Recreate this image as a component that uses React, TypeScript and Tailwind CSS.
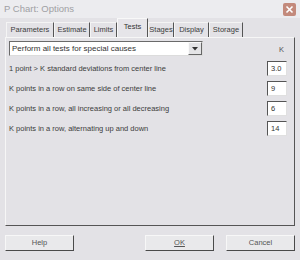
import React from "react";

const tabs = [
  { label: "Parameters", w: 48 },
  { label: "Estimate", w: 36 },
  { label: "Limits", w: 27 },
  { label: "Tests", w: 31, active: true },
  { label: "Stages", w: 26 },
  { label: "Display", w: 35 },
  { label: "Storage", w: 34 },
];

const rows = [
  { text: "1 point > K standard deviations from center line", value: "3.0" },
  { text: "K points in a row on same side of center line", value: "9" },
  { text: "K points in a row, all increasing or all decreasing", value: "6" },
  { text: "K points in a row, alternating up and down", value: "14" },
];

const Button = ({ label, w, underline }: { label: string; w: string; underline?: boolean }) => (
  <div
    className={`${w} h-[16px] flex items-center justify-center bg-[#e9e9eb] border border-t-[#f7f7f7] border-l-[#f7f7f7] border-r-[#4a4a4a] border-b-[#4a4a4a] text-[#555]`}
  >
    {underline ? <span className="underline">{label}</span> : label}
  </div>
);

export default function App() {
  return (
    <div
      className="w-[300px] h-[260px] bg-[#e3e2e6] text-[7.5px] text-[#3c3c3c] overflow-hidden"
      style={{ fontFamily: "'Liberation Sans', Arial, sans-serif" }}
    >
      {/* title bar */}
      <div className="h-[18px] bg-[#ececef] flex items-center justify-between pl-[4px] pr-[4px]">
        <span className="text-[9.5px] text-[#a0a0a4]">P Chart: Options</span>
        <div className="w-[13px] h-[13px] bg-[#c38a7c] rounded-[2px] flex items-center justify-center mt-[1px]">
          <svg width="9" height="9" viewBox="0 0 9 9">
            <path d="M1.5 1.5 L7.5 7.5 M7.5 1.5 L1.5 7.5" stroke="#fff" strokeWidth="1.6" />
          </svg>
        </div>
      </div>

      <div className="px-[5px]">
        {/* tabs */}
        <div className="flex items-end h-[19px] pl-[1px]">
          {tabs.map((t) =>
            t.active ? (
              <div
                key={t.label}
                className="h-[19px] flex items-center justify-center bg-[#e6e5e9] border-t border-l border-t-[#f8f8f8] border-l-[#f8f8f8] border-r border-r-[#555] text-[#333] pb-[3px]"
                style={{ width: t.w }}
              >
                {t.label}
              </div>
            ) : (
              <div
                key={t.label}
                className="h-[15px] flex items-center justify-center border-t border-l border-t-[#f4f4f4] border-l-[#f4f4f4] border-r border-r-[#555]"
                style={{ width: t.w }}
              >
                {t.label}
              </div>
            )
          )}
        </div>

        {/* panel */}
        <div className="h-[189px] border-l border-t border-l-[#f6f6f6] border-t-[#f6f6f6] border-r border-b border-r-[#555] border-b-[#555] pl-[3px] pr-[7px] pt-[3px]">
          <div className="flex items-start justify-between">
            <div className="w-[194px] h-[15px] bg-white border border-t-[#6a6a6a] border-l-[#6a6a6a] border-r-[#dcdcdc] border-b-[#dcdcdc] flex items-center justify-between pl-[2px] pr-0">
              <span className="text-[#333] text-[8px]">Perform all tests for special causes</span>
              <div className="w-[14px] h-[13px] bg-[#e4e4e6] border border-t-[#fafafa] border-l-[#fafafa] border-r-[#666] border-b-[#666] flex items-center justify-center">
                <svg width="6" height="4" viewBox="0 0 6 4">
                  <path d="M0 0 L6 0 L3 3.5 Z" fill="#333" />
                </svg>
              </div>
            </div>
            <span className="mt-[3px] mr-[3px] text-[#555]">K</span>
          </div>

          <div className="flex flex-col gap-[5px] mt-[5px]">
            {rows.map((r) => (
              <div key={r.text} className="flex items-center justify-between h-[15px]">
                <span>{r.text}</span>
                <div className="w-[20px] h-[15px] bg-white border border-t-[#555] border-l-[#555] border-r-[#e0e0e0] border-b-[#e0e0e0] flex items-center pl-[3px] text-[#333]">
                  {r.value}
                </div>
              </div>
            ))}
          </div>
        </div>

        {/* buttons */}
        <div className="flex items-center mt-[9px]">
          <Button label="Help" w="w-[69px]" />
          <div className="flex-1" />
          <Button label="OK" w="w-[69px]" underline />
          <div className="w-[12px]" />
          <Button label="Cancel" w="w-[69px]" />
        </div>
      </div>
    </div>
  );
}
